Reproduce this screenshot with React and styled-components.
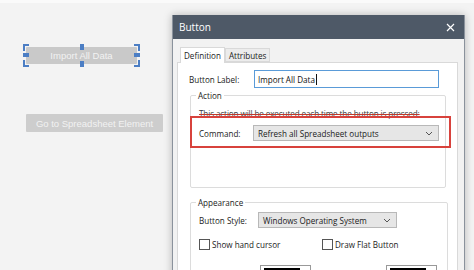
import styled, { createGlobalStyle } from "styled-components";

const GlobalStyle = createGlobalStyle`
  html, body {
    margin: 0;
    padding: 0;
    background: #f3f3f3;
  }
  body {
    font-family: "Open Sans", "Noto Sans", sans-serif;
  }
`;

const Page = styled.div`
  width: 474px;
  height: 270px;
  overflow: hidden;
  display: flex;
  align-items: flex-start;
  background: #f3f3f3;
  border-top: 3px solid #fafafa;
  box-sizing: border-box;
`;

const Canvas = styled.div`
  width: 172px;
  flex-shrink: 0;
  display: flex;
  flex-direction: column;
  align-items: flex-start;
  padding: 44px 0 0 26px;
  box-sizing: border-box;
`;

const DesignButton = styled.div`
  position: relative;
  box-sizing: border-box;
  width: ${({ w }) => w}px;
  height: ${({ h }) => h}px;
  margin-top: ${({ top }) => top || 0}px;
  background: ${({ selected }) => (selected ? "#c9c9c9" : "#cdcdcd")};
  color: #f2f2f2;
  font-family: "Liberation Sans", Arial, sans-serif;
  font-size: 9.5px;
  display: flex;
  align-items: center;
  justify-content: center;
  border-radius: 1px;
`;

const Handle = styled.span`
  position: absolute;
  width: 4px;
  height: 5px;
  border-color: #4c7ec4;
  border-style: solid;
  border-width: 0;
  ${({ v }) => (v === "t" ? "top: -3px;" : v === "b" ? "bottom: -3px;" : "top: 6px;")}
  ${({ h }) => (h === "l" ? "left: -3px;" : h === "r" ? "right: -3px;" : "left: 54px;")}
  ${({ v }) => (v === "t" ? "border-top-width: 2px;" : v === "b" ? "border-bottom-width: 2px;" : "")}
  ${({ h }) => (h === "l" ? "border-left-width: 2px;" : h === "r" ? "border-right-width: 2px;" : "")}
  ${({ v, h }) => (v === "m" || h === "m" ? "background: #4c7ec4; width: 4px; height: 4px;" : "")}
`;

const Dialog = styled.div`
  width: 291px;
  flex-shrink: 0;
  margin-top: 12px;
  background: #f2f2f2;
  border-left: 1px solid #8a929c;
  border-right: 1px solid #8a929c;
  box-shadow: 0 0 8px rgba(0, 0, 0, 0.25);
  height: 270px;
`;

const TitleBar = styled.div`
  height: 24px;
  background: #4e5967;
  color: #ffffff;
  display: flex;
  align-items: center;
  justify-content: space-between;
  padding: 0 9px 0 6px;
  font-size: 10px;
`;

const Body = styled.div`
  padding: 7px 6px 0 4px;
  font-size: 8.1px;
`;

const Tabs = styled.div`
  display: flex;
  align-items: flex-end;
  padding-left: 3px;
  height: 16px;
`;

const Tab = styled.div`
  box-sizing: border-box;
  height: ${({ active }) => (active ? 16 : 14)}px;
  padding: 0 3px;
  color: #1a1a1a;
  display: flex;
  align-items: center;
  background: ${({ active }) => (active ? "#ffffff" : "#ececec")};
  border: 1px solid #d9d9d9;
  border-bottom: ${({ active }) => (active ? "none" : "1px solid #d9d9d9")};
  margin-bottom: ${({ active }) => (active ? "-1px" : "0")};
  position: relative;
  z-index: ${({ active }) => (active ? 1 : 0)};
`;

const Panel = styled.div`
  background: #ffffff;
  border: 1px solid #d9d9d9;
  height: 220px;
  padding: 7px 0 0 11px;
  box-sizing: border-box;
`;

const Row = styled.div`
  display: flex;
  align-items: center;
  margin-top: ${({ top }) => top || 0}px;
`;

const Label = styled.span`
  width: ${({ w }) => w}px;
  color: #1a1a1a;
`;

const TextInput = styled.div`
  box-sizing: border-box;
  width: 185px;
  height: 18px;
  border: 1px solid #5a9bd8;
  background: #fff;
  color: #111;
  display: flex;
  align-items: center;
  padding-left: 3px;
`;

const Caret = styled.span`
  display: inline-block;
  width: 1px;
  height: 11px;
  background: #111;
  margin-left: 1px;
`;

const Group = styled.fieldset`
  position: relative;
  margin: ${({ top }) => top || 0}px 0 0 1px;
  width: ${({ w }) => w}px;
  height: ${({ h }) => h}px;
  box-sizing: border-box;
  border: 1px solid #dcdcdc;
  padding: 0 0 0 8px;
  border-radius: 2px;
`;

const Legend = styled.legend`
  color: #1a1a1a;
  padding: 0 2px;
  margin-left: -3px;
`;

const Struck = styled.div`
  color: #3a3a3a;
  text-decoration: line-through;
  text-decoration-color: #c0392b;
  margin-top: 7px;
  white-space: nowrap;
  letter-spacing: -0.1px;
`;

const Select = styled.div`
  box-sizing: border-box;
  width: ${({ w }) => w}px;
  height: ${({ h }) => h}px;
  border: 1px solid #b8b8b8;
  background: #e6e6e6;
  color: #1a1a1a;
  display: flex;
  align-items: center;
  justify-content: space-between;
  padding: 0 5px 0 4px;
`;

const Highlight = styled.div`
  position: absolute;
  left: -1px;
  top: 15px;
  width: 261px;
  height: 32px;
  border: 2px solid #d8423c;
  box-sizing: border-box;
  pointer-events: none;
`;

const CheckRow = styled.div`
  display: flex;
  margin-top: 11px;
`;

const Check = styled.label`
  display: flex;
  align-items: center;
  width: ${({ w }) => w}px;
  color: #1a1a1a;
`;

const Box = styled.span`
  width: 9px;
  height: 9px;
  border: 1px solid #555;
  background: #fff;
  margin-right: 2px;
`;

const SwatchRow = styled.div`
  display: flex;
  margin-top: 15px;
  padding-left: 61px;
  gap: 75px;
`;

const Swatch = styled.div`
  width: 51px;
  height: 10px;
  border: 1px solid #999;
  background: #fff;
  padding: 2px 10px 0 3px;
  box-sizing: border-box;
  &::after {
    content: "";
    display: block;
    height: 100%;
    background: #000;
  }
`;

const Chevron = () => (
  <svg width="8" height="5" viewBox="0 0 8 5">
    <path d="M1 1l3 3 3-3" fill="none" stroke="#555" strokeWidth="1" />
  </svg>
);

const CloseIcon = () => (
  <svg width="9" height="9" viewBox="0 0 9 9">
    <path d="M1 1l7 7M8 1L1 8" stroke="#fff" strokeWidth="1.2" />
  </svg>
);

const App = () => (
  <>
    <GlobalStyle />
    <Page>
      <Canvas>
        <DesignButton w={111} h={17} selected>
          Import All Data
          <Handle v="t" h="l" />
          <Handle v="t" h="m" />
          <Handle v="t" h="r" />
          <Handle v="m" h="l" />
          <Handle v="m" h="r" />
          <Handle v="b" h="l" />
          <Handle v="b" h="m" />
          <Handle v="b" h="r" />
        </DesignButton>
        <DesignButton w={137} h={18} top={50}>
          Go to Spreadsheet Element
        </DesignButton>
      </Canvas>
      <Dialog>
        <TitleBar>
          <span>Button</span>
          <CloseIcon />
        </TitleBar>
        <Body>
          <Tabs>
            <Tab active>Definition</Tab>
            <Tab>Attributes</Tab>
          </Tabs>
          <Panel>
            <Row>
              <Label w={65}>Button Label:</Label>
              <TextInput>
                Import All Data
                <Caret />
              </TextInput>
            </Row>
            <Group w={256} h={98} top={2}>
              <Legend>Action</Legend>
              <Struck>This action will be executed each time the button is pressed:</Struck>
              <Row top={6}>
                <Label w={54}>Command:</Label>
                <Select w={186} h={16}>
                  Refresh all Spreadsheet outputs
                  <Chevron />
                </Select>
              </Row>
              <Highlight />
            </Group>
            <Group w={258} h={80} top={9}>
              <Legend>Appearance</Legend>
              <Row top={4}>
                <Label w={59}>Button Style:</Label>
                <Select w={139} h={16}>
                  Windows Operating System
                  <Chevron />
                </Select>
              </Row>
              <CheckRow>
                <Check w={123}>
                  <Box />
                  Show hand cursor
                </Check>
                <Check>
                  <Box />
                  Draw Flat Button
                </Check>
              </CheckRow>
              <SwatchRow>
                <Swatch />
                <Swatch />
              </SwatchRow>
            </Group>
          </Panel>
        </Body>
      </Dialog>
    </Page>
  </>
);

export default App;
